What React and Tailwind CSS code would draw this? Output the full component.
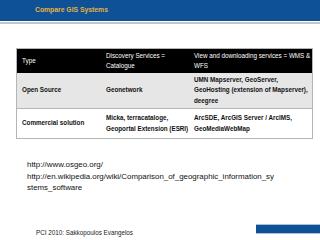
import React from "react";

const rows = [
  {
    type: "Open Source",
    discovery: ["Geonetwork"],
    view: ["UMN Mapserver, GeoServer,", "GeoHosting (extension of Mapserver),", "deegree"],
    bg: "bg-[#e6e6e6]",
    h: "h-[35px]",
  },
  {
    type: "Commercial solution",
    discovery: ["Micka, terracataloge,", "Geoportal Extension (ESRI)"],
    view: ["ArcSDE, ArcGIS Server / ArcIMS,", "GeoMediaWebMap"],
    bg: "bg-white",
    h: "h-[30px]",
  },
];

const Lines = ({ lines }) => (
  <div>
    {lines.map((l, i) => (
      <div key={i} className="whitespace-nowrap">{l}</div>
    ))}
  </div>
);

const App = () => {
  return (
    <div className="w-[320px] h-[240px] bg-white overflow-hidden grid grid-rows-[21px_1px_2px_24px_auto_20px_auto_1fr_17px] font-['Liberation_Sans',Arial,sans-serif]">
      <div className="bg-[#0e5196] flex items-center pl-[35px]">
        <span className="text-[6.8px] font-bold text-[#e3b23c]">Compare GIS Systems</span>
      </div>
      <div></div>
      <div className="bg-[#c6c6c6]"></div>
      <div></div>

      <div className="ml-[16px] w-[297px] border border-[#b5b5b5] text-[6.3px] leading-[10.5px] text-[#111]">
        <div className="h-[24px] bg-black text-white flex items-center">
          <div className="w-[84px] pl-[5px]">Type</div>
          <div className="w-[88px] pl-[5px]">
            <Lines lines={["Discovery Services =", "Catalogue"]} />
          </div>
          <div className="flex-1 pl-[5px]">
            <Lines lines={["View and downloading services = WMS &", "WFS"]} />
          </div>
        </div>
        {rows.map((r, i) => (
          <div
            key={i}
            className={`${r.h} ${r.bg} flex items-center font-bold ${i > 0 ? "border-t border-[#b5b5b5]" : ""}`}
          >
            <div className="w-[84px] pl-[5px]">{r.type}</div>
            <div className="w-[88px] pl-[5px]">
              <Lines lines={r.discovery} />
            </div>
            <div className="flex-1 pl-[5px]">
              <Lines lines={r.view} />
            </div>
          </div>
        ))}
      </div>
      <div></div>

      <div className="pl-[27px] text-[7.9px] leading-[11px] text-[#111]">
        <div>http://www.osgeo.org/</div>
        <div className="mt-[1px]">http://en.wikipedia.org/wiki/Comparison_of_geographic_information_sy</div>
        <div>stems_software</div>
      </div>
      <div></div>

      <div className="grid grid-cols-[1fr_64px]">
        <div className="pl-[36px] pt-[5px] text-[6.3px] leading-[10px] text-[#222]">
          PCI 2010: Sakkopoulos Evangelos
        </div>
        <div className="pt-[1px]">
          <div className="h-[10px] bg-[#0e5196] border-y border-[#a9bfda]"></div>
        </div>
      </div>
    </div>
  );
};

export default App;
